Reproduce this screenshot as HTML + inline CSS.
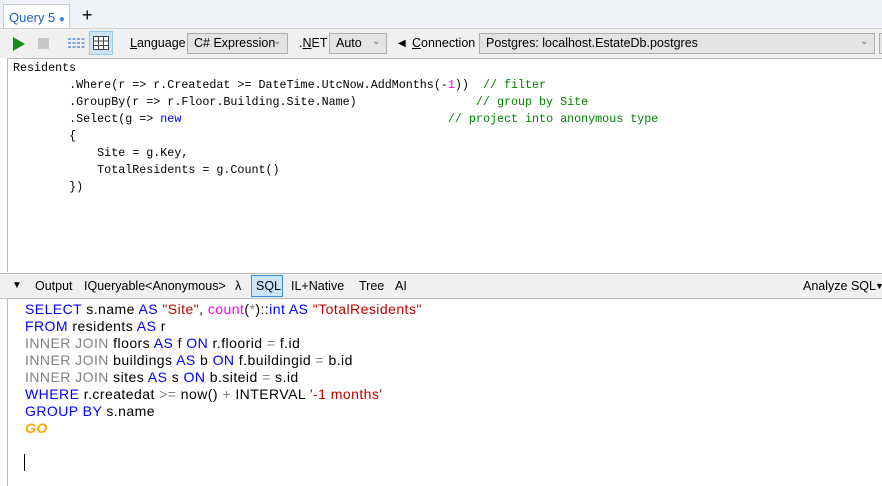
<!DOCTYPE html>
<html><head><style>
*{margin:0;padding:0;box-sizing:border-box}
body{width:882px;height:486px;overflow:hidden;background:#fff;font-family:"Liberation Sans",sans-serif;font-size:12px;color:#000;position:relative}
.abs{position:absolute}
#tabbar{left:0;top:0;width:882px;height:30px;background:#eef1f5}
#tab{left:3px;top:4px;width:67px;height:27px;background:#fff;border:1px solid #c8c8c8;border-bottom:none;color:#1f5fbf;font-size:13px;padding:5px 0 0 5px}
#toolbar{left:0;top:28px;width:882px;height:30px;background:#f0f0f0;border-top:1px solid #d0d0d0}
.sel{background:#e3e3e3;border:1px solid #adadad;height:21px;font-size:12.5px;padding:2px 0 0 6px;white-space:nowrap}
.chev{position:absolute;right:6px;top:2px;font-size:9px;color:#555}
#editor{left:7px;top:58px;width:875px;height:214px;border-left:1px solid #bbb;border-top:1px solid #bbb;font-family:"Liberation Mono",monospace;font-size:11.7px;line-height:17px;padding:1px 0 0 5px;white-space:pre}
#rbar{left:0;top:273px;width:882px;height:26px;background:#f0f0f0;border-top:1px solid #bbb;border-bottom:1px solid #bbb;font-size:12.5px}
#rbar span{position:absolute;top:5px}
#sql{left:7px;top:299px;width:875px;height:187px;border-left:1px solid #bbb;font-size:14px;letter-spacing:.45px;line-height:17px;padding:2px 0 0 17px;white-space:pre}
.k{color:#0000ff}.g{color:#808080}.s{color:#c00000}.m{color:#ff00ff}.c{color:#008000}.n{color:#0000ff}
</style></head><body>
<div class="abs" id="tabbar"></div>
<div class="abs" id="tab">Query 5 <span style="color:#3a86d8;font-size:10px">●</span></div>
<div class="abs" style="left:82px;top:5px;font-size:18px">+</div>
<div class="abs" id="toolbar"></div>
<svg class="abs" style="left:12px;top:36px" width="14" height="16"><path d="M1 1 L13 8 L1 15Z" fill="#1a8a1a"/></svg>
<div class="abs" style="left:38px;top:38px;width:11px;height:11px;background:#c8c8c8"></div>
<svg class="abs" style="left:68px;top:37px" width="18" height="14"><g stroke="#3a7bd5" stroke-width="1.2" stroke-dasharray="3 1.5"><line x1="0" y1="2" x2="18" y2="2"/><line x1="0" y1="6" x2="18" y2="6"/><line x1="0" y1="10" x2="18" y2="10"/></g></svg>
<div class="abs" style="left:89px;top:31px;width:24px;height:24px;background:#cce4f7;border:1px solid #99c9ef"></div>
<svg class="abs" style="left:93px;top:36px" width="16" height="14"><rect x=".5" y=".5" width="15" height="13" fill="#fff" stroke="#444"/><path d="M.5 5H15.5M.5 9.5H15.5M5.5 .5V13.5M10.5 .5V13.5" stroke="#444"/></svg>
<div class="abs" style="left:130px;top:36px;font-size:12.5px"><u>L</u>anguage</div>
<div class="abs sel" style="left:187px;top:33px;width:101px">C# Expression<span class="chev">⌄</span></div>
<div class="abs" style="left:299px;top:36px;font-size:12.5px">.<u>N</u>ET</div>
<div class="abs sel" style="left:329px;top:33px;width:58px">Auto<span class="chev">⌄</span></div>
<div class="abs" style="left:398px;top:38px;font-size:10px">◀</div>
<div class="abs" style="left:412px;top:36px;font-size:12.5px"><u>C</u>onnection</div>
<div class="abs sel" style="left:479px;top:33px;width:396px;padding-left:6px">Postgres: localhost.EstateDb.postgres<span class="chev">⌄</span></div>
<div class="abs" style="left:879px;top:33px;width:5px;height:21px;border:1px solid #adadad;background:#e3e3e3"></div>
<div class="abs" id="editor">Residents
        .Where(r =&gt; r.Createdat &gt;= DateTime.UtcNow.AddMonths(-<span class="m">1</span>))  <span class="c">// filter</span>
        .GroupBy(r =&gt; r.Floor.Building.Site.Name)                 <span class="c">// group by Site</span>
        .Select(g =&gt; <span class="n">new</span>                                      <span class="c">// project into anonymous type</span>
        {
            Site = g.Key,
            TotalResidents = g.Count()
        })</div>
<div class="abs" id="rbar">
<span style="left:12px;top:6px;font-size:10px">▼</span>
<span style="left:35px">Output</span>
<span style="left:84px">IQueryable&lt;Anonymous&gt;</span>
<span style="left:235px">λ</span>
<span style="left:251px;top:1px;width:32px;height:22px;background:#cce4f7;border:1px solid #3a8fd8;padding:3px 0 0 4px">SQL</span>
<span style="left:291px">IL+Native</span>
<span style="left:359px">Tree</span>
<span style="left:395px">AI</span>
<span style="left:803px">Analyze SQL</span>
<span style="left:875px;top:7px;font-size:9px">▼</span>
</div>
<div class="abs" id="sql"><span class="k">SELECT</span> s.name <span class="k">AS</span> <span class="s">"Site"</span>, <span class="m">count</span>(<span class="g">*</span>)::<span class="k">int</span> <span class="k">AS</span> <span class="s">"TotalResidents"</span>
<span class="k">FROM</span> residents <span class="k">AS</span> r
<span class="g">INNER JOIN</span> floors <span class="k">AS</span> f <span class="k">ON</span> r.floorid <span class="g">=</span> f.id
<span class="g">INNER JOIN</span> buildings <span class="k">AS</span> b <span class="k">ON</span> f.buildingid <span class="g">=</span> b.id
<span class="g">INNER JOIN</span> sites <span class="k">AS</span> s <span class="k">ON</span> b.siteid <span class="g">=</span> s.id
<span class="k">WHERE</span> r.createdat <span class="g">&gt;=</span> now() <span class="g">+</span> INTERVAL <span class="s">'-1 months'</span>
<span class="k">GROUP BY</span> s.name
<b style="color:#ffa500;font-style:italic">GO</b></div>
<div class="abs" style="left:24px;top:454px;width:1px;height:17px;background:#000"></div>
</body></html>
